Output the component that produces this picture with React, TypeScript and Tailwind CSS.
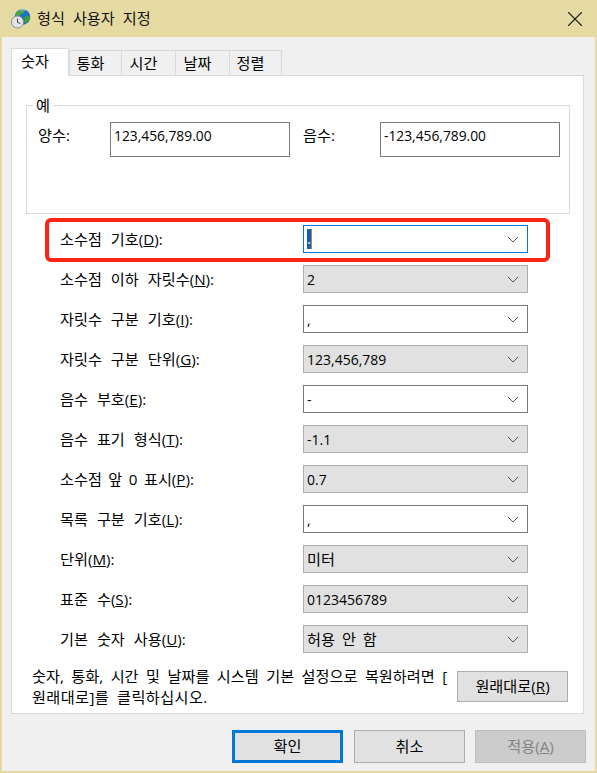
import { X } from 'lucide-react';

const FONT = "font-['Open_Sans','Noto_Sans_CJK_KR',sans-serif]";
const HANGUL = 'text-[15.2px] text-black whitespace-nowrap';

const rows = [
  { label: '소수점 기호', key: 'D', value: '', kind: 'focus' },
  { label: '소수점 이하 자릿수', key: 'N', value: '2', kind: 'gray' },
  { label: '자릿수 구분 기호', key: 'I', value: ',', kind: 'white' },
  { label: '자릿수 구분 단위', key: 'G', value: '123,456,789', kind: 'gray' },
  { label: '음수 부호', key: 'E', value: '-', kind: 'white' },
  { label: '음수 표기 형식', key: 'T', value: '-1.1', kind: 'gray' },
  { label: '소수점 앞 0 표시', key: 'P', value: '0.7', kind: 'gray', tight: true },
  { label: '목록 구분 기호', key: 'L', value: ',', kind: 'white' },
  { label: '단위', key: 'M', value: '미터', kind: 'gray' },
  { label: '표준 수', key: 'S', value: '0123456789', kind: 'gray' },
  { label: '기본 숫자 사용', key: 'U', value: '허용 안 함', kind: 'gray' },
];

const GlobeIcon = () => (
  <svg width="20" height="20" viewBox="0 0 20 20">
    <circle cx="11.5" cy="8" r="7.8" fill="#1f6fc4" />
    <path d="M6 3c2-2 5-2.5 7-1.5 1 1.5-1 3-3 3.5S8 8 6 9 4.500 5 6 3z" fill="#49a83a" />
    <path d="M14 7c2-.5 4-.5 5 .5 0 3-2 6-4.500 7-1.500-2-1.500-5-.5-7.500z" fill="#3f9e35" />
    <path d="M9 1.500c2-1 4-1 5.500 0" fill="none" stroke="#9fd0f5" strokeWidth="1" />
    <circle cx="6.500" cy="13" r="6" fill="#e3e6e8" stroke="#8a8f94" />
    <path d="M6.500 9.500v3.800l2.800 1.200" fill="none" stroke="#3c3c3c" strokeWidth="1" />
  </svg>
);

const Chevron = () => (
  <svg width="12" height="7" viewBox="0 0 12 7" className="shrink-0">
    <path d="M1 1l5 5 5-5" fill="none" stroke="#555" strokeWidth="1" />
  </svg>
);

const Label = ({ text, hotkey, tight }: { text: string; hotkey: string; tight?: boolean }) => (
  <span className={`${HANGUL} ${tight ? '[word-spacing:2.5px]' : '[word-spacing:5px]'}`}>
    {text}(<span className="underline">{hotkey}</span>):
  </span>
);

const Dropdown = ({ value, kind }: { value: string; kind: string }) => {
  const tone =
    kind === 'focus'
      ? 'bg-white border-[#0078d7]'
      : kind === 'white'
        ? 'bg-white border-[#7a7a7a]'
        : 'bg-[#e1e1e1] border-[#adadad]';
  const isHangul = /[가-힣]/.test(value);
  return (
    <div className={`w-[225px] h-[28px] border flex items-center justify-between pl-[3px] pr-[8px] ${tone}`}>
      {kind === 'focus' ? (
        <span className="w-[5px] h-[20px] bg-[#0a63c4] border-r border-[#e8751a] text-white text-[14px] leading-[19px] flex justify-center">.</span>
      ) : (
        <span className={isHangul ? `${HANGUL} [word-spacing:3px]` : 'text-[14px] text-black whitespace-nowrap'}>{value}</span>
      )}
      <Chevron />
    </div>
  );
};

const SampleBox = ({ value }: { value: string }) => (
  <div className="w-[180px] h-[35px] border border-[#7a7a7a] px-[3px] pt-[1px] text-[13.8px] text-black leading-[24px]">
    {value}
  </div>
);

const Tab = ({ text, width, active }: { text: string; width: string; active?: boolean }) => (
  <div
    className={
      active
        ? `${width} h-[28px] -mb-px z-10 bg-white border border-b-0 border-[#d9d9d9] flex items-center justify-center pr-[10px] pb-[2px] ${HANGUL}`
        : `${width} h-[25px] mt-[2px] -ml-px bg-[#f0f0f0] border border-b-0 border-[#d9d9d9] flex items-center justify-center pr-[10px] ${HANGUL}`
    }
  >
    {text}
  </div>
);

const DialogButton = ({ className, children }: { className: string; children: React.ReactNode }) => (
  <button className={`w-[111px] flex items-center justify-center text-[15.2px] ${className}`}>{children}</button>
);

export default function App() {
  return (
    <div className={`w-[597px] h-[773px] bg-[#e5daa2] flex flex-col overflow-hidden ${FONT}`}>
      <div className="h-[37px] shrink-0 flex items-center pl-[11px] pr-[9px]">
        <GlobeIcon />
        <span className="ml-[6px] text-[15.2px] [word-spacing:4px] text-[#111]">형식 사용자 지정</span>
        <X className="ml-auto text-[#222]" size={26} strokeWidth={1} />
      </div>

      <div className="flex-1 ml-[2px] mr-[2px] mb-[2px] bg-[#f0f0f0] flex flex-col pl-[9px] pr-[11px] pt-[11px]">
        <div className="flex">
          <Tab text="숫자" width="w-[58px]" active />
          <div className="flex ml-px">
            <Tab text="통화" width="w-[53px]" />
            <Tab text="시간" width="w-[55px]" />
            <Tab text="날짜" width="w-[55px]" />
            <Tab text="정렬" width="w-[53px]" />
          </div>
        </div>

        <div className="relative h-[639px] bg-white border border-[#d9d9d9] px-[14px] pt-[20px]">
          <fieldset className="h-[118px] border border-[#d9d9d9] px-[9px]">
            <legend className={`-ml-[3px] px-[3px] leading-[18px] ${HANGUL}`}>예</legend>
            <div className="flex items-start pt-[8px]">
              <span className={`w-[74px] pl-[2px] pt-[2px] ${HANGUL}`}>양수:</span>
              <SampleBox value="123,456,789.00" />
              <span className={`w-[90px] pl-[13px] pt-[2px] ${HANGUL}`}>음수:</span>
              <SampleBox value="-123,456,789.00" />
            </div>
          </fieldset>

          <div className="flex flex-col gap-[12px] mt-[11px]">
            {rows.map((row) => (
              <div key={row.key} className="flex items-center h-[28px] pl-[34px]">
                <div className="w-[243px]">
                  <Label text={row.label} hotkey={row.key} tight={row.tight} />
                </div>
                <Dropdown value={row.value} kind={row.kind} />
              </div>
            ))}
          </div>

          <div className="flex mt-[13px] ml-[6px]">
            <p className={`w-[425px] leading-[21px] [word-spacing:3.5px] ${HANGUL}`}>
              숫자, 통화, 시간 및 날짜를 시스템 기본 설정으로 복원하려면 [<br />
              <span className="tracking-[0.4px]">원래대로]를 클릭하십시오.</span>
            </p>
            <DialogButton className="h-[31px] mt-[5px] bg-[#e1e1e1] border border-[#adadad] text-black">
              원래대로(<span className="underline">R</span>)
            </DialogButton>
          </div>

          {/* red highlight drawn over the first row */}
          <div className="absolute left-[33px] top-[142px] w-[505px] h-[44px] border-[4px] border-[#fc2317] rounded-[6px]" />
        </div>

        <div className="flex justify-end mt-[16px] -mr-[2px]">
          <DialogButton className="h-[33px] bg-[#e1e1e1] border-[3px] border-[#0078d7] text-black">확인</DialogButton>
          <DialogButton className="h-[33px] ml-[11px] bg-[#e1e1e1] border border-[#adadad] text-black">취소</DialogButton>
          <DialogButton className="h-[33px] ml-[10px] bg-[#cccccc] border border-[#bfbfbf] text-[#838383]">
            적용(<span className="underline">A</span>)
          </DialogButton>
        </div>
      </div>
    </div>
  );
}
